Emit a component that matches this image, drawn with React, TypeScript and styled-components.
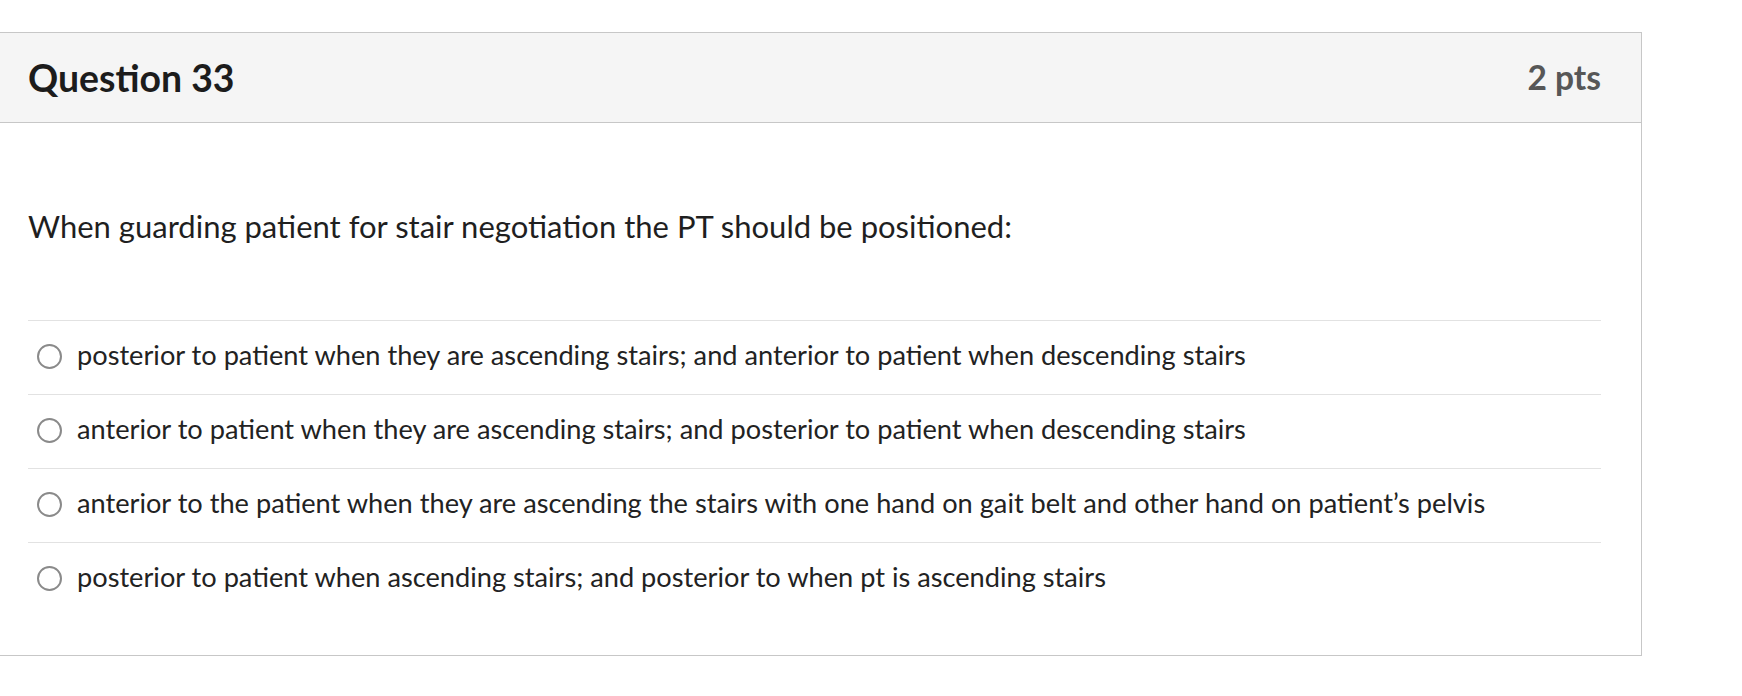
import React from "react";
import styled, { createGlobalStyle } from "styled-components";

const Global = createGlobalStyle`
  html, body { margin: 0; padding: 0; background: #ffffff; }
  body { font-family: Lato, "Open Sans", "Liberation Sans", sans-serif; }
`;

const Page = styled.div`
  padding-top: 32px;
  display: flex;
`;

const Card = styled.section`
  width: 1643px;
  margin-left: -1px;
  border: 1px solid #c7c7c7;
  background: #ffffff;
  box-sizing: border-box;
`;

const Header = styled.header`
  display: flex;
  align-items: center;
  justify-content: space-between;
  height: 90px;
  padding: 0 40px 1px 28px;
  box-sizing: border-box;
  background: #f5f5f5;
  border-bottom: 1px solid #c7c7c7;
`;

const Title = styled.h2`
  margin: 0;
  font-size: 37.4px;
  font-weight: 700;
  color: #1c1c1c;
`;

const Points = styled.span`
  font-size: 33.5px;
  font-weight: 700;
  color: #575757;
`;

const Body = styled.div`
  padding: 82px 40px 39px 28px;
`;

const QuestionText = styled.p`
  margin: 0 0 73px;
  font-size: 31px;
  line-height: 42px;
  color: #1f1f1f;
`;

const Answers = styled.div`
  display: flex;
  flex-direction: column;
`;

const Answer = styled.label`
  display: flex;
  align-items: center;
  gap: 15px;
  height: 73px;
  padding-left: 9px;
  border-top: 1px solid #e2e2e2;
  font-size: 27.2px;
  color: #222222;
`;

const AnswerText = styled.span`
  padding-bottom: 6px;
`;

const Radio = styled.span`
  width: 25px;
  height: 25px;
  margin-bottom: 2px;
  box-sizing: border-box;
  border: 2px solid #8a8a8a;
  border-radius: 50%;
  background: #ffffff;
  flex: none;
`;

const answers = [
  "posterior to patient when they are ascending stairs; and anterior to patient when descending stairs",
  "anterior to patient when they are ascending stairs; and posterior to patient when descending stairs",
  "anterior to the patient when they are ascending the stairs with one hand on gait belt and other hand on patient\u2019s pelvis",
  "posterior to patient when ascending stairs; and posterior to when pt is ascending stairs",
];

export default function App() {
  return (
    <>
      <Global />
      <Page>
        <Card>
          <Header>
            <Title>Question 33</Title>
            <Points>2 pts</Points>
          </Header>
          <Body>
            <QuestionText>
              When guarding patient for stair negotiation the PT should be positioned:
            </QuestionText>
            <Answers>
              {answers.map((a) => (
                <Answer key={a}>
                  <Radio />
                  <AnswerText>{a}</AnswerText>
                </Answer>
              ))}
            </Answers>
          </Body>
        </Card>
      </Page>
    </>
  );
}
